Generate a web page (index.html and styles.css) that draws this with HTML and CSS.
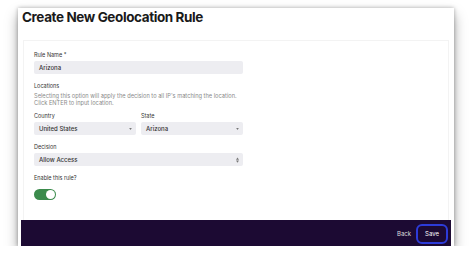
FILE: index.html
```html
<!DOCTYPE html>
<html>
<head>
  <meta name="viewport" content="width=device-width, initial-scale=1.0">
  <title>Create New Geolocation Rule</title>
  <link rel="stylesheet" href="styles.css">
</head>
<body>
  <div class="modal">
    <h1 class="modal-title">Create New Geolocation Rule</h1>

    <div class="card">
      <div class="field">
        <label class="label">Rule Name *</label>
        <div class="input">Arizona</div>
      </div>

      <div class="field">
        <label class="label">Locations</label>
        <p class="hint">Selecting this option will apply the decision to all IP's matching the location.<br>Click ENTER to input location.</p>
      </div>

      <div class="row">
        <div class="field">
          <label class="label">Country</label>
          <div class="input select">United States
            <svg class="caret" width="3" height="2" viewBox="0 0 4 3"><path d="M0 0h4L2 3z" fill="#777"/></svg>
          </div>
        </div>
        <div class="field">
          <label class="label">State</label>
          <div class="input select">Arizona
            <svg class="caret" width="3" height="2" viewBox="0 0 4 3"><path d="M0 0h4L2 3z" fill="#777"/></svg>
          </div>
        </div>
      </div>

      <div class="field">
        <label class="label">Decision</label>
        <div class="input select">Allow Access
          <svg class="caret" width="3" height="6" viewBox="0 0 4 7"><path d="M2 0l2 3H0zM0 4h4L2 7z" fill="#777"/></svg>
        </div>
      </div>

      <div class="field">
        <label class="label">Enable this rule?</label>
        <div class="toggle"><span class="knob"></span></div>
      </div>
    </div>

    <div class="footer">
      <button class="btn-back">Back</button>
      <button class="btn-save">Save</button>
    </div>
  </div>
</body>
</html>
```

FILE: styles.css
```css
body {
  margin: 0;
  background-color: #fff;
  font-family: Inter, "Noto Sans", sans-serif;
  color: #222;
}

.modal {
  margin: 8px 0 0 18px;
  width: 436px;
  height: 238px;
  background-color: #fff;
  box-shadow: 0 7px 12px rgba(0, 0, 0, 0.35), 0 0 4px rgba(0, 0, 0, 0.3);
  padding: 0 3px;
  box-sizing: border-box;
  display: flex;
  flex-direction: column;
}

.modal-title {
  margin: 0;
  height: 32px;
  padding: 1px 0 0 1px;
  box-sizing: border-box;
  font-size: 13.5px;
  font-weight: 700;
  letter-spacing: -0.4px;
  color: #1a1a1a;
}

.card {
  flex: 1;
  margin: 0 2px;
  border: 1px solid #f3f3f3;
  border-bottom: none;
  padding: 11px 10px 0 10px;
  display: flex;
  flex-direction: column;
  gap: 9px;
}

.field {
  display: flex;
  flex-direction: column;
  gap: 2px;
}

.label {
  font-size: 5.5px;
  line-height: 7px;
  color: #333;
}

.hint {
  margin: 0;
  font-size: 5.7px;
  line-height: 7px;
  color: #8a8a8a;
}

.input {
  width: 209px;
  height: 13px;
  box-sizing: border-box;
  background-color: #ededf1;
  border-radius: 2px;
  padding: 0 4px 0 5px;
  font-size: 6px;
  font-weight: 500;
  line-height: 13px;
  color: #333;
  display: flex;
  justify-content: space-between;
  align-items: center;
}

.row {
  display: flex;
  gap: 5px;
  margin-top: -2px;
}

.row .input {
  width: 102px;
}

.toggle {
  margin-top: 5px;
  width: 22px;
  height: 11px;
  border-radius: 6px;
  background-color: #3b8b4c;
  display: flex;
  justify-content: flex-end;
  align-items: center;
  padding: 0 1px;
  box-sizing: border-box;
}

.knob {
  width: 9px;
  height: 9px;
  border-radius: 50%;
  background-color: #fff;
}

.footer {
  height: 26px;
  background-color: #1c0a33;
  display: flex;
  justify-content: flex-end;
  align-items: center;
  gap: 3px;
  padding: 1px 3px 0 0;
  box-sizing: border-box;
}

button {
  font-family: inherit;
  font-size: 6px;
  background: none;
  border: none;
  color: #ddd;
  cursor: pointer;
}

.btn-back {
  padding: 0 2px;
}

.btn-save {
  width: 32px;
  height: 20px;
  color: #fff;
  border: 2px solid #2d3bd8;
  border-radius: 6px;
}
```
